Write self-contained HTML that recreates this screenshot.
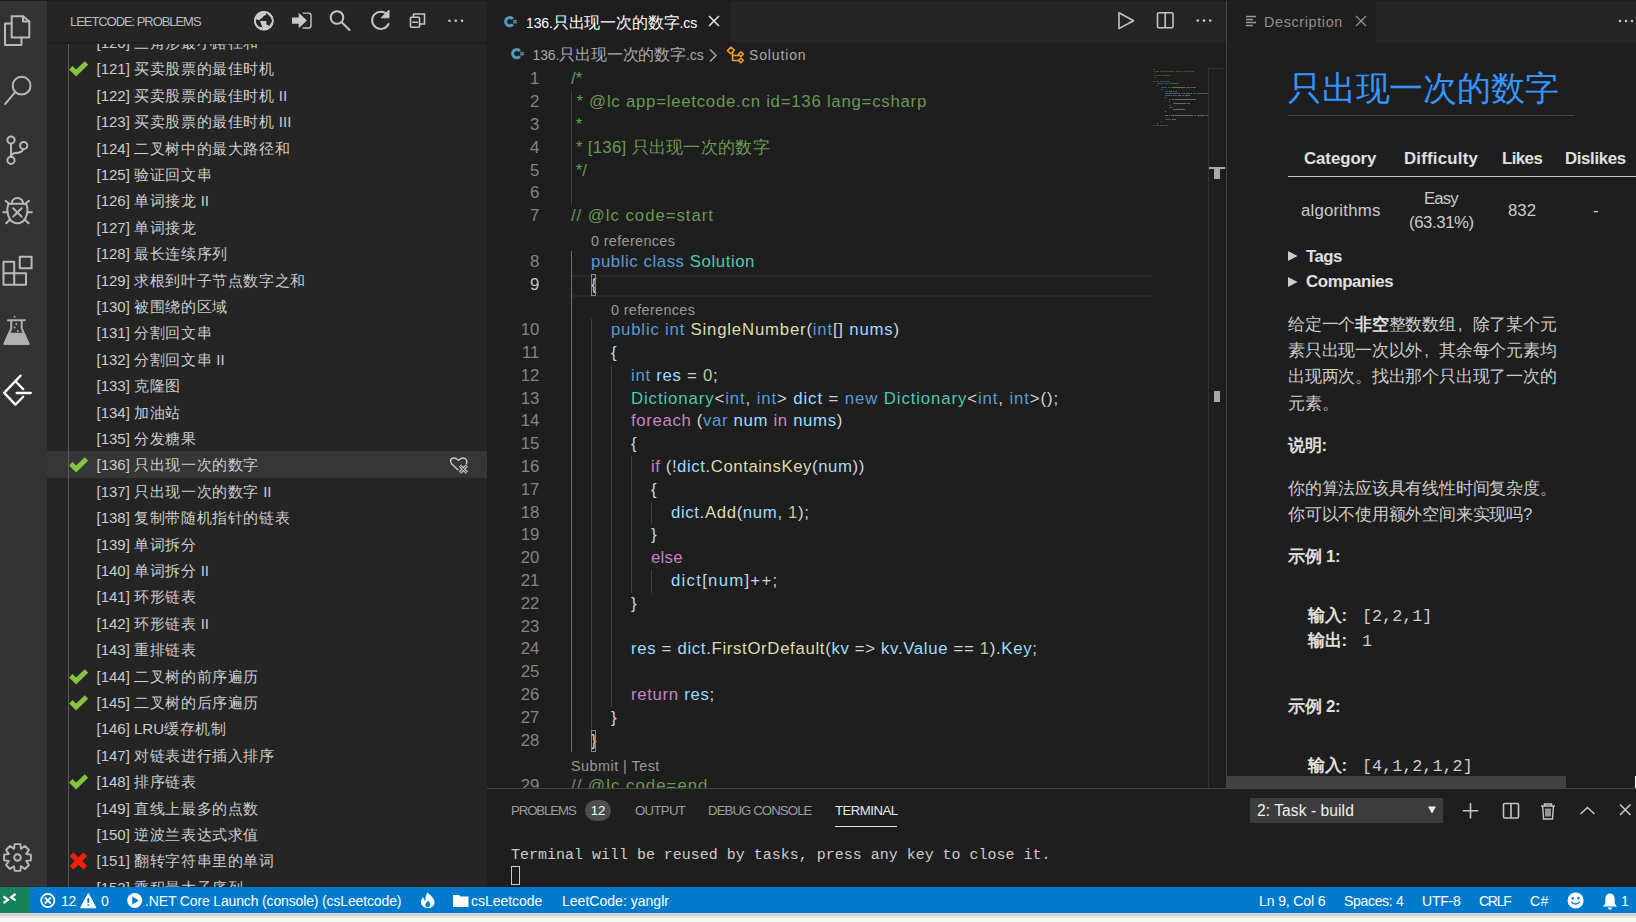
<!DOCTYPE html><html><head><meta charset="utf-8"><style>
*{box-sizing:border-box;margin:0;padding:0}
html,body{width:1636px;height:922px;overflow:hidden;background:#1e1e1e;font-family:"Liberation Sans",sans-serif}
.abs{position:absolute}
#act{left:0;top:0;width:47px;height:887px;background:#333333}
#side{left:47px;top:0;width:440px;height:887px;background:#252526;overflow:hidden}
#sidehdr{left:0;top:0;width:440px;height:42px;background:#252526;z-index:2}
#sidehdr .t{left:23px;top:14.2px;font-size:13px;color:#bbbbbb;white-space:nowrap}
.row{position:absolute;left:0;width:440px;height:26.4px;color:#cccccc;font-size:15px;white-space:nowrap}
.row .tx{position:absolute;left:49.5px;top:5px;line-height:18px}
.row.sel{background:#363636}
#guide{left:21px;top:42px;width:1px;height:845px;background:#585858;z-index:1}
#tabs1{left:487px;top:0;width:739px;height:42px;background:#252526}
#tab1{left:0;top:0;width:243px;height:42px;background:#1e1e1e}
#bc{left:487px;top:42px;width:739px;height:26.4px;background:#1e1e1e}
#code{left:487px;top:68.4px;width:739px;height:719.6px;overflow:hidden;background:#1e1e1e}
.ln{position:absolute;left:0;width:52.4px;text-align:right;font-size:16.8px;color:#858585;line-height:22.8px;height:22.8px}
.cl{position:absolute;white-space:pre;font-size:16.8px;line-height:22.8px;height:22.8px;color:#d4d4d4}
.lens{position:absolute;white-space:pre;font-size:14.4px;line-height:22.8px;color:#999999}
.ig{position:absolute;width:1px;background:#404040}
.c{color:#6a9955}.k{color:#569cd6}.m{color:#c586c0}.t{color:#4ec9b0}.v{color:#9cdcfe}.f{color:#dcdcaa}.n{color:#b5cea8}
#tabs2{left:1226px;top:0;width:410px;height:42px;background:#252526;border-left:1px solid #444444}
#desc{left:1226px;top:42px;width:410px;height:746px;background:#1e1e1e;border-left:1px solid #444444;overflow:hidden}
#panel{left:487px;top:788px;width:1149px;height:99px;background:#1e1e1e;border-top:1px solid #444444}
#status{left:0;top:887px;width:1636px;height:26.4px;background:#007acc;color:#fff;font-size:15.6px;white-space:nowrap}
#remote{left:0;top:0;width:30px;height:26.4px;background:#16825d}

.dh{font-size:16.8px;font-weight:bold;color:#e0e0e0;white-space:nowrap;line-height:20px}
.dt{font-size:16.8px;color:#cccccc;white-space:nowrap;line-height:20px}
.dp{font-size:16.8px;color:#cccccc;white-space:nowrap;line-height:26.2px;letter-spacing:-0.22px}
.dp b{color:#e0e0e0}
.fc{display:inline-block;width:16.8px;text-align:left;padding-left:2px}
.mg{margin-left:15px}
.mono{font-family:"Liberation Mono",monospace;font-size:16.8px;letter-spacing:0}
.pt{position:absolute;top:14px;font-size:13.2px;color:#9d9d9d;white-space:nowrap;line-height:16px}
.sb{position:absolute;top:4.8px;font-size:14px;color:#ffffff;white-space:nowrap;line-height:18px}
.cj{font-size:15.6px}
.row .cj{font-size:15.2px;letter-spacing:0.62px}
#bottom{left:0;top:913.4px;width:1636px;height:8.6px;background:linear-gradient(#dcd5d2 0,#dcd5d2 0.6px,#d1d1d1 0.6px,#d1d1d1 2.6px,#e5e5e5 2.6px,#e5e5e5 5.3px,#f6f7f7 5.3px)}
#desct{letter-spacing:0.629px}#d_cat{letter-spacing:-0.044px}#d_dif{letter-spacing:0.220px}#d_lik{letter-spacing:-0.544px}#d_dis{letter-spacing:-0.344px}#d_alg{letter-spacing:0.208px}#d_easy{letter-spacing:-0.878px}#d_pct{letter-spacing:-0.412px}#d_832{letter-spacing:0.000px}#d_tags{letter-spacing:-0.555px}#d_comp{letter-spacing:-0.363px}#p_prob{letter-spacing:-1.075px}#p_out{letter-spacing:-0.670px}#p_dbg{letter-spacing:-0.889px}#p_term{letter-spacing:-0.523px}#p_text{letter-spacing:0.028px}#p_task{letter-spacing:0.064px}#s_12{letter-spacing:-0.389px}#s_net{letter-spacing:-0.146px}#s_cs{letter-spacing:-0.031px}#s_lc{letter-spacing:0.022px}#s_ln{letter-spacing:-0.111px}#s_sp{letter-spacing:-0.318px}#s_utf{letter-spacing:-0.234px}#s_crlf{letter-spacing:-1.291px}#s_cs2{letter-spacing:0.447px}#d_title{letter-spacing:-0.188px}#sbt{letter-spacing:-1.058px}#tabt{letter-spacing:-0.143px}#bct{letter-spacing:-0.143px}#bcs{letter-spacing:0.863px}#cl2{letter-spacing:0.747px}#cl4{letter-spacing:0.297px}#cl7{letter-spacing:0.956px}#lens0{letter-spacing:0.350px}#cl8{letter-spacing:0.567px}#lens1{letter-spacing:0.350px}#cl10{letter-spacing:0.790px}#cl12{letter-spacing:0.712px}#cl13{letter-spacing:0.886px}#cl14{letter-spacing:0.642px}#cl16{letter-spacing:0.559px}#cl18{letter-spacing:0.621px}#cl20{letter-spacing:0.276px}#cl21{letter-spacing:1.251px}#cl24{letter-spacing:0.658px}#cl26{letter-spacing:0.664px}#lens2{letter-spacing:0.473px}#cl29{letter-spacing:1.033px}</style></head><body><div id="act" class="abs"><svg width="47" height="887" style="position:absolute;left:0;top:0" fill="none" stroke="#b9b9b9" stroke-width="2" stroke-linejoin="round" stroke-linecap="round">
<path d="M11.5 23.5 H5 V45 H21.5 V37.5"/>
<path d="M11.7 16.2 H23 L29.3 21.5 V37.5 H11.7 Z"/><path d="M23 16.2 V21.5 H29.3"/>
<circle cx="21.6" cy="85.7" r="8.9"/><path d="M15.2 92.2 L5.2 103.9"/>
<circle cx="11" cy="140" r="3.6"/><circle cx="11" cy="160.3" r="3.6"/><circle cx="23.7" cy="145.6" r="3.6"/>
<path d="M11 143.6 V156.7"/><path d="M23.2 149.2 C22 152.5 19 153 16 153 C13 153 11.5 154 11 156.7"/>
<path d="M11.6 203.7 A5.8 5.8 0 0 1 23.2 203.7"/><path d="M8.6 203.7 H26.2 C28 208 27.8 214 25 219 C22.8 222.5 20 223.3 17.4 223.3 C14.8 223.3 12 222.5 9.8 219 C7 214 6.8 208 8.6 203.7 Z"/>
<path d="M13.2 208.2 L21.6 216.6 M21.6 208.2 L13.2 216.6"/>
<path d="M5.5 200.8 L9.6 204 M29 200.8 L25.2 204 M3.3 212.2 H7.6 M31.9 212.2 H27.4 M6.2 223.3 L10.4 219.2 M28.6 223.3 L24.4 219.2"/>
<path d="M3.5 261.8 H14.2 V273.3 H26 V284.8 H3.5 Z M3.5 273.3 H14.2 V284.8"/>
<rect x="19.8" y="256.8" width="11.8" height="11.4"/>
<path d="M8 320.2 H24.8 M11.2 320.5 V328.5 L4.5 343.8 H28.5 L21.7 328.5 V320.5" stroke="#b0b0b0"/>
<path d="M9 333.8 H23.8 L28.5 343.8 H4.5 Z" fill="#b0b0b0" stroke="#b0b0b0"/>
<g fill="#b0b0b0" stroke="none"><circle cx="14.6" cy="316.8" r="1"/><circle cx="16.3" cy="324" r="1"/><circle cx="14.6" cy="327.6" r="1"/><circle cx="17.9" cy="331" r="1"/></g>
<path d="M20.6 375.6 L4.2 392.9 L15.4 404.6 L23.2 396.8 M15.4 381.3 L23.2 389.1 M16.6 393 H30.8" stroke="#ffffff" stroke-width="2.3"/>
</svg>
<svg class="abs" style="left:0;top:0" width="47" height="887"><path fill="none" stroke="#b9b9b9" stroke-width="1.9" stroke-linejoin="round" d="M13.98 848.78 L14.65 844.10 L20.35 844.10 L21.02 848.78 L21.17 848.85 L24.96 846.01 L28.99 850.04 L26.15 853.83 L26.22 853.98 L30.90 854.65 L30.90 860.35 L26.22 861.02 L26.15 861.17 L28.99 864.96 L24.96 868.99 L21.17 866.15 L21.02 866.22 L20.35 870.90 L14.65 870.90 L13.98 866.22 L13.83 866.15 L10.04 868.99 L6.01 864.96 L8.85 861.17 L8.78 861.02 L4.10 860.35 L4.10 854.65 L8.78 853.98 L8.85 853.83 L6.01 850.04 L10.04 846.01 L13.83 848.85 Z"/><circle cx="17.5" cy="857.5" r="3.3" fill="none" stroke="#b9b9b9" stroke-width="1.9"/></svg>
</div>
<div id="side" class="abs">
<div id="sidehdr" class="abs"><div class="t abs" id="sbt">LEETCODE: PROBLEMS</div>
<svg class="abs" style="left:0;top:0" width="440" height="42" fill="none" stroke="#c5c5c5" stroke-width="2" stroke-linecap="round" stroke-linejoin="round">
<circle cx="216.9" cy="20.7" r="9.6" fill="#c9c9c9" stroke="none"/>
<path d="M209.2 19.3 L212.9 20.6 L214 24 L215.6 27.6 L211.5 26.5 L209 23 Z" fill="#252526" stroke="none"/>
<path d="M219.4 13.1 L223.5 17 L225.2 21 L222.5 25.8 L219.4 24.6 L219.4 21 L213.1 21 L212.9 19.2 L215.4 17.9 L216.3 16.2 L218.8 15 Z" fill="#252526" stroke="none"/>
<circle cx="216.9" cy="20.7" r="9" stroke="#c9c9c9" stroke-width="1.6"/>
<path d="M245 17.6 H251.7 V12.8 L259.9 20.6 L251.7 28.3 V23.8 H245 Z" fill="#c9c9c9" stroke="none"/>
<path d="M256.2 13.1 H261.5 Q264 13.1 264 15.6 V25.5 Q264 28 261.5 28 H256.2" stroke-width="1.4"/>
<circle cx="290" cy="17.5" r="6.3"/><path d="M294.5 22 L302.5 30"/>
<path d="M340.5 15 A8.6 8.6 0 1 0 341.5 24"/><path d="M342 10.5 V17.8 H334.5 Z" fill="#c5c5c5" stroke-width="1"/>
<rect x="363.5" y="17.2" width="9" height="10" rx="1" stroke-width="1.6"/><path d="M366.5 17 V14 H377.5 V24 H372.8" stroke-width="1.6"/><path d="M365.8 22.2 H370.3" stroke-width="1.6"/>
<g fill="#c5c5c5" stroke="none"><circle cx="402.5" cy="20.8" r="1.3"/><circle cx="408.8" cy="20.8" r="1.3"/><circle cx="415" cy="20.8" r="1.3"/></g>
</svg></div>
<div id="guide" class="abs"></div>
<div class="row" style="top:28.9px"><span class="tx">[120] <span class="cj">三角形最小路径和</span></span></div>
<div class="row" style="top:55.3px"><svg class="abs" style="left:0;top:0" width="45" height="26"><path d="M22.1 14.5 L25.5 11 L29.1 14.4 L37.8 6.2 L41.2 9.8 L29.1 21.5 Z" fill="#82c341"/></svg><span class="tx">[121] <span class="cj">买卖股票的最佳时机</span></span></div>
<div class="row" style="top:81.7px"><span class="tx">[122] <span class="cj">买卖股票的最佳时机</span> II</span></div>
<div class="row" style="top:108.1px"><span class="tx">[123] <span class="cj">买卖股票的最佳时机</span> III</span></div>
<div class="row" style="top:134.5px"><span class="tx">[124] <span class="cj">二叉树中的最大路径和</span></span></div>
<div class="row" style="top:160.9px"><span class="tx">[125] <span class="cj">验证回文串</span></span></div>
<div class="row" style="top:187.3px"><span class="tx">[126] <span class="cj">单词接龙</span> II</span></div>
<div class="row" style="top:213.7px"><span class="tx">[127] <span class="cj">单词接龙</span></span></div>
<div class="row" style="top:240.1px"><span class="tx">[128] <span class="cj">最长连续序列</span></span></div>
<div class="row" style="top:266.5px"><span class="tx">[129] <span class="cj">求根到叶子节点数字之和</span></span></div>
<div class="row" style="top:292.9px"><span class="tx">[130] <span class="cj">被围绕的区域</span></span></div>
<div class="row" style="top:319.3px"><span class="tx">[131] <span class="cj">分割回文串</span></span></div>
<div class="row" style="top:345.7px"><span class="tx">[132] <span class="cj">分割回文串</span> II</span></div>
<div class="row" style="top:372.1px"><span class="tx">[133] <span class="cj">克隆图</span></span></div>
<div class="row" style="top:398.5px"><span class="tx">[134] <span class="cj">加油站</span></span></div>
<div class="row" style="top:424.9px"><span class="tx">[135] <span class="cj">分发糖果</span></span></div>
<div class="row sel" style="top:451.3px"><svg class="abs" style="left:0;top:0" width="45" height="26"><path d="M22.1 14.5 L25.5 11 L29.1 14.4 L37.8 6.2 L41.2 9.8 L29.1 21.5 Z" fill="#82c341"/></svg><span class="tx">[136] <span class="cj">只出现一次的数字</span></span><svg class="abs" style="left:400px;top:5px" width="26" height="20" fill="none" stroke="#c5c5c5" stroke-width="1.5" stroke-linejoin="round"><path d="M11.3 14.2 L4.8 8 C2.6 5.9 3.2 2.2 6.8 2.1 C9 2 10.3 3.3 11.5 4.3 C12.7 3.3 14 2 16.2 2.1 C19.8 2.2 20.6 5.8 19.2 8.4"/><path d="M12.9 9.7 L19.9 16.7 M19.9 9.7 L12.9 16.7" stroke-width="3.2" stroke-linecap="butt"/><path d="M12.9 9.7 L19.9 16.7 M19.9 9.7 L12.9 16.7" stroke="#363636" stroke-width="1" stroke-linecap="butt"/></svg></div>
<div class="row" style="top:477.7px"><span class="tx">[137] <span class="cj">只出现一次的数字</span> II</span></div>
<div class="row" style="top:504.1px"><span class="tx">[138] <span class="cj">复制带随机指针的链表</span></span></div>
<div class="row" style="top:530.5px"><span class="tx">[139] <span class="cj">单词拆分</span></span></div>
<div class="row" style="top:556.9px"><span class="tx">[140] <span class="cj">单词拆分</span> II</span></div>
<div class="row" style="top:583.3px"><span class="tx">[141] <span class="cj">环形链表</span></span></div>
<div class="row" style="top:609.7px"><span class="tx">[142] <span class="cj">环形链表</span> II</span></div>
<div class="row" style="top:636.1px"><span class="tx">[143] <span class="cj">重排链表</span></span></div>
<div class="row" style="top:662.5px"><svg class="abs" style="left:0;top:0" width="45" height="26"><path d="M22.1 14.5 L25.5 11 L29.1 14.4 L37.8 6.2 L41.2 9.8 L29.1 21.5 Z" fill="#82c341"/></svg><span class="tx">[144] <span class="cj">二叉树的前序遍历</span></span></div>
<div class="row" style="top:688.9px"><svg class="abs" style="left:0;top:0" width="45" height="26"><path d="M22.1 14.5 L25.5 11 L29.1 14.4 L37.8 6.2 L41.2 9.8 L29.1 21.5 Z" fill="#82c341"/></svg><span class="tx">[145] <span class="cj">二叉树的后序遍历</span></span></div>
<div class="row" style="top:715.3px"><span class="tx">[146] LRU<span class="cj">缓存机制</span></span></div>
<div class="row" style="top:741.7px"><span class="tx">[147] <span class="cj">对链表进行插入排序</span></span></div>
<div class="row" style="top:768.1px"><svg class="abs" style="left:0;top:0" width="45" height="26"><path d="M22.1 14.5 L25.5 11 L29.1 14.4 L37.8 6.2 L41.2 9.8 L29.1 21.5 Z" fill="#82c341"/></svg><span class="tx">[148] <span class="cj">排序链表</span></span></div>
<div class="row" style="top:794.5px"><span class="tx">[149] <span class="cj">直线上最多的点数</span></span></div>
<div class="row" style="top:820.9px"><span class="tx">[150] <span class="cj">逆波兰表达式求值</span></span></div>
<div class="row" style="top:847.3px"><svg class="abs" style="left:0;top:0" width="45" height="26"><path d="M22.9 8.9 L26.4 5.4 L31.4 10.3 L36.5 5.4 L40.1 8.9 L35.2 14.1 L40.1 19.1 L36.5 22.6 L31.4 17.7 L26.4 22.6 L22.9 19.1 L27.6 14.1 Z" fill="#f52100"/></svg><span class="tx">[151] <span class="cj">翻转字符串里的单词</span></span></div>
<div class="row" style="top:873.7px"><span class="tx">[152] <span class="cj">乘积最大子序列</span></span></div>
</div>
<div id="tabs1" class="abs"><div id="tab1" class="abs"><svg class="abs" style="left:16.5px;top:14.5px" width="13.299999999999999" height="13.299999999999999" viewBox="0 0 14 14"><path d="M9.3 4.2 A4.3 4.3 0 1 0 9.3 9.8" fill="none" stroke="#519aba" stroke-width="3.2"/><path d="M10.6 5 V9.2 M12.6 5 V9.2 M9.6 6.2 H13.6 M9.6 8 H13.6" stroke="#519aba" stroke-width="0.9"/></svg>
<div class="abs" id="tabt" style="left:39px;top:13.5px;font-size:14px;line-height:18px;color:#ffffff;white-space:nowrap">136.<span class="cj">只出现一次的数字</span>.cs</div>
<svg class="abs" style="left:221px;top:15px" width="12" height="12"><path d="M1 1 L11 11 M11 1 L1 11" stroke="#e8e8e8" stroke-width="1.5"/></svg></div>
<svg class="abs" style="left:620px;top:0" width="119" height="42" fill="none" stroke="#c5c5c5" stroke-width="1.6" stroke-linejoin="round">
<path d="M12 12.8 L26.5 20.7 L12 28.6 Z"/>
<rect x="50.5" y="12.8" width="15.5" height="15" rx="1.5"/><path d="M58.2 12.8 V27.8"/>
<g fill="#c5c5c5" stroke="none"><circle cx="90.8" cy="20.6" r="1.3"/><circle cx="97" cy="20.6" r="1.3"/><circle cx="103.2" cy="20.6" r="1.3"/></g>
</svg></div>
<div id="bc" class="abs"><svg class="abs" style="left:23.5px;top:5px" width="13.299999999999999" height="13.299999999999999" viewBox="0 0 14 14"><path d="M9.3 4.2 A4.3 4.3 0 1 0 9.3 9.8" fill="none" stroke="#519aba" stroke-width="3.2"/><path d="M10.6 5 V9.2 M12.6 5 V9.2 M9.6 6.2 H13.6 M9.6 8 H13.6" stroke="#519aba" stroke-width="0.9"/></svg>
<div class="abs" id="bct" style="left:45.5px;top:4px;font-size:14px;line-height:18px;color:#a9a9a9;white-space:nowrap">136.<span class="cj">只出现一次的数字</span>.cs</div>
<svg class="abs" style="left:220px;top:6px" width="12" height="16"><path d="M3 1.5 L9 7.5 L3 13.5" fill="none" stroke="#a9a9a9" stroke-width="1.4"/></svg>
<svg class="abs" style="left:239px;top:3px" width="20" height="20" viewBox="0 0 20 20" fill="none" stroke="#ee9d28" stroke-width="1.6" stroke-linejoin="round"><path d="M1.5 5.6 L5 2 L8.3 5.3 L4.8 8.8 Z"/><path d="M6.6 7 V15.5 H13"/><path d="M6.6 10.5 H13"/><path d="M12.5 9.2 L15 6.8 L17.3 9.1 L14.8 11.5 Z"/><path d="M12.5 15.5 L15 13 L17.3 15.3 L14.8 17.8 Z"/></svg>
<div class="abs" id="bcs" style="left:262px;top:4px;font-size:14px;line-height:18px;color:#a9a9a9;white-space:nowrap">Solution</div>
</div>
<div id="code" class="abs">
<div class="ln" style="top:0.0px;color:#858585">1</div>
<div class="cl" style="left:84px;top:0.0px"><span class="c">/*</span></div>
<div class="ln" style="top:22.8px;color:#858585">2</div>
<div class="cl" id="cl2" style="left:84px;top:22.8px"><span class="c"> * @lc app=leetcode.cn id=136 lang=csharp</span></div>
<div class="ln" style="top:45.6px;color:#858585">3</div>
<div class="cl" style="left:84px;top:45.6px"><span class="c"> *</span></div>
<div class="ln" style="top:68.4px;color:#858585">4</div>
<div class="cl" id="cl4" style="left:84px;top:68.4px"><span class="c"> * [136] 只出现一次的数字</span></div>
<div class="ln" style="top:91.2px;color:#858585">5</div>
<div class="cl" style="left:84px;top:91.2px"><span class="c"> */</span></div>
<div class="ln" style="top:114.0px;color:#858585">6</div>
<div class="cl" style="left:84px;top:114.0px"></div>
<div class="ln" style="top:136.8px;color:#858585">7</div>
<div class="cl" id="cl7" style="left:84px;top:136.8px"><span class="c">// @lc code=start</span></div>
<div class="lens" id="lens0" style="left:104px;top:161.9px">0 references</div>
<div class="ln" style="top:182.4px;color:#858585">8</div>
<div class="cl" id="cl8" style="left:104px;top:182.4px"><span class="k">public</span> <span class="k">class</span> <span class="t">Solution</span></div>
<div class="ln" style="top:205.2px;color:#c6c6c6">9</div>
<div class="cl" style="left:104px;top:205.2px">{</div>
<div class="lens" id="lens1" style="left:124px;top:230.3px">0 references</div>
<div class="ln" style="top:250.8px;color:#858585">10</div>
<div class="cl" id="cl10" style="left:124px;top:250.8px"><span class="k">public</span> <span class="k">int</span> <span class="f">SingleNumber</span>(<span class="k">int</span>[] <span class="v">nums</span>)</div>
<div class="ln" style="top:273.6px;color:#858585">11</div>
<div class="cl" style="left:124px;top:273.6px">{</div>
<div class="ln" style="top:296.4px;color:#858585">12</div>
<div class="cl" id="cl12" style="left:144px;top:296.4px"><span class="k">int</span> <span class="v">res</span> = <span class="n">0</span>;</div>
<div class="ln" style="top:319.2px;color:#858585">13</div>
<div class="cl" id="cl13" style="left:144px;top:319.2px"><span class="t">Dictionary</span>&lt;<span class="k">int</span>, <span class="k">int</span>&gt; <span class="v">dict</span> = <span class="k">new</span> <span class="t">Dictionary</span>&lt;<span class="k">int</span>, <span class="k">int</span>&gt;();</div>
<div class="ln" style="top:342.0px;color:#858585">14</div>
<div class="cl" id="cl14" style="left:144px;top:342.0px"><span class="m">foreach</span> (<span class="k">var</span> <span class="v">num</span> <span class="m">in</span> <span class="v">nums</span>)</div>
<div class="ln" style="top:364.8px;color:#858585">15</div>
<div class="cl" style="left:144px;top:364.8px">{</div>
<div class="ln" style="top:387.6px;color:#858585">16</div>
<div class="cl" id="cl16" style="left:164px;top:387.6px"><span class="m">if</span> (!<span class="v">dict</span>.<span class="f">ContainsKey</span>(<span class="v">num</span>))</div>
<div class="ln" style="top:410.4px;color:#858585">17</div>
<div class="cl" style="left:164px;top:410.4px">{</div>
<div class="ln" style="top:433.2px;color:#858585">18</div>
<div class="cl" id="cl18" style="left:184px;top:433.2px"><span class="v">dict</span>.<span class="f">Add</span>(<span class="v">num</span>, <span class="n">1</span>);</div>
<div class="ln" style="top:456.0px;color:#858585">19</div>
<div class="cl" style="left:164px;top:456.0px">}</div>
<div class="ln" style="top:478.8px;color:#858585">20</div>
<div class="cl" id="cl20" style="left:164px;top:478.8px"><span class="m">else</span></div>
<div class="ln" style="top:501.6px;color:#858585">21</div>
<div class="cl" id="cl21" style="left:184px;top:501.6px"><span class="v">dict</span>[<span class="v">num</span>]++;</div>
<div class="ln" style="top:524.4px;color:#858585">22</div>
<div class="cl" style="left:144px;top:524.4px">}</div>
<div class="ln" style="top:547.2px;color:#858585">23</div>
<div class="cl" style="left:144px;top:547.2px"></div>
<div class="ln" style="top:570.0px;color:#858585">24</div>
<div class="cl" id="cl24" style="left:144px;top:570.0px"><span class="v">res</span> = <span class="v">dict</span>.<span class="f">FirstOrDefault</span>(<span class="v">kv</span> =&gt; <span class="v">kv</span>.<span class="v">Value</span> == <span class="n">1</span>).<span class="v">Key</span>;</div>
<div class="ln" style="top:592.8px;color:#858585">25</div>
<div class="cl" style="left:144px;top:592.8px"></div>
<div class="ln" style="top:615.6px;color:#858585">26</div>
<div class="cl" id="cl26" style="left:144px;top:615.6px"><span class="m">return</span> <span class="v">res</span>;</div>
<div class="ln" style="top:638.4px;color:#858585">27</div>
<div class="cl" style="left:124px;top:638.4px">}</div>
<div class="ln" style="top:661.2px;color:#858585">28</div>
<div class="cl" style="left:104px;top:661.2px">}</div>
<div class="lens" id="lens2" style="left:84px;top:686.3px">Submit | Test</div>
<div class="ln" style="top:706.8px;color:#858585">29</div>
<div class="cl" id="cl29" style="left:84px;top:706.8px"><span class="c">// @lc code=end</span></div>
<div class="abs" style="left:84px;top:22.8px;width:1px;height:114.0px;background:#404040"></div>
<div class="abs" style="left:84px;top:182.4px;width:1px;height:501.6px;background:#707070"></div>
<div class="abs" style="left:104px;top:250.8px;width:1px;height:410.4px;background:#404040"></div>
<div class="abs" style="left:124px;top:296.4px;width:1px;height:342.0px;background:#404040"></div>
<div class="abs" style="left:144px;top:387.6px;width:1px;height:136.8px;background:#404040"></div>
<div class="abs" style="left:164px;top:433.2px;width:1px;height:22.8px;background:#404040"></div>
<div class="abs" style="left:164px;top:501.6px;width:1px;height:22.8px;background:#404040"></div>
<div class="abs" style="left:85px;top:206.2px;width:580px;height:22.8px;border-top:2px solid #282828;border-bottom:2px solid #282828"></div>
<div class="abs" style="left:104px;top:205.2px;width:4.5px;height:22.8px;border:1px solid #888888"></div>
<div class="abs" style="left:104px;top:661.2px;width:4.5px;height:22.8px;border:1px solid #888888"></div>
</div>
<div id="tabs2" class="abs"><div class="abs" style="left:0;top:0;width:149px;height:42px;background:#1e1e1e"></div>
<svg class="abs" style="left:19px;top:15px" width="12" height="12"><path d="M0 1.5 H10 M0 4.5 H7 M0 7.5 H10 M0 10.5 H7" stroke="#9a9a9a" stroke-width="1.6"/></svg>
<div id="desct" class="abs" style="left:37px;top:13.5px;font-size:14.4px;color:#8f8f8f;white-space:nowrap">Description</div>
<svg class="abs" style="left:128px;top:15px" width="12" height="12"><path d="M1 1 L11 11 M11 1 L1 11" stroke="#8f8f8f" stroke-width="1.4"/></svg>
<g></g><svg class="abs" style="left:389px;top:16px" width="20" height="10"><g fill="#c5c5c5"><circle cx="4" cy="5" r="1.3"/><circle cx="10" cy="5" r="1.3"/><circle cx="16" cy="5" r="1.3"/></g></svg>
</div>
<div id="desc" class="abs">
<div id="d_title" class="abs" style="left:61px;top:26.5px;font-size:33.6px;color:#3794ff;white-space:nowrap;line-height:40px">只出现一次的数字</div>
<div class="abs" style="left:61px;top:73px;width:286px;height:1px;background:#464646"></div>
<div id="d_cat" class="abs dh" style="left:77px;top:106.6px">Category</div>
<div id="d_dif" class="abs dh" style="left:177px;top:106.6px">Difficulty</div>
<div id="d_lik" class="abs dh" style="left:275px;top:106.6px">Likes</div>
<div id="d_dis" class="abs dh" style="left:338px;top:106.6px">Dislikes</div>
<div class="abs" style="left:61px;top:134px;width:360px;height:1px;background:#cccccc"></div>
<div id="d_alg" class="abs dt" style="left:74px;top:158.5px">algorithms</div>
<div id="d_easy" class="abs dt" style="left:197px;top:147px">Easy</div>
<div id="d_pct" class="abs dt" style="left:182px;top:171px">(63.31%)</div>
<div id="d_832" class="abs dt" style="left:281px;top:159px">832</div>
<div class="abs dt" style="left:366px;top:159px">-</div>
<svg class="abs" style="left:60px;top:208px" width="12" height="12"><path d="M1 1 L10.5 6 L1 11 Z" fill="#cccccc"/></svg>
<div id="d_tags" class="abs dh" style="left:79px;top:204.5px">Tags</div>
<svg class="abs" style="left:60px;top:234px" width="12" height="12"><path d="M1 1 L10.5 6 L1 11 Z" fill="#cccccc"/></svg>
<div id="d_comp" class="abs dh" style="left:79px;top:230px">Companies</div>
<div class="abs dp" style="left:61px;top:270px;width:290px">给定一个<b>非空</b>整数数组<span class="fc">,</span>除了某个元<br>素只出现一次以外<span class="fc">,</span>其余每个元素均<br>出现两次。找出那个只出现了一次的<br>元素。</div>
<div class="abs dp" style="left:61px;top:391px"><b>说明:</b></div>
<div class="abs dp" style="left:61px;top:434px;width:300px">你的算法应该具有线性时间复杂度。<br>你可以不使用额外空间来实现吗?</div>
<div class="abs dp" style="left:61px;top:502px"><b>示例 1:</b></div>
<div class="abs dp" style="left:81px;top:560.5px"><b>输入:</b><span class="mono mg">[2,2,1]</span></div><div class="abs dp" style="left:81px;top:585.5px"><b>输出:</b><span class="mono mg">1</span></div>
<div class="abs dp" style="left:61px;top:651.5px"><b>示例 2:</b></div>
<div class="abs dp" style="left:81px;top:711px"><b>输入:</b><span class="mono mg">[4,1,2,1,2]</span></div>
<div class="abs" style="left:0;top:734px;width:339px;height:12px;background:#424242"></div>
</div>
<div id="panel" class="abs">
<div id="p_prob" class="pt" style="left:24px">PROBLEMS</div>
<div class="abs" style="left:98px;top:11px;width:26px;height:21px;border-radius:11px;background:#4d4d4d;color:#fff;font-size:13.2px;text-align:center;line-height:21px">12</div>
<div id="p_out" class="pt" style="left:148px">OUTPUT</div>
<div id="p_dbg" class="pt" style="left:221px">DEBUG CONSOLE</div>
<div id="p_term" class="pt" style="left:348px;color:#e7e7e7">TERMINAL</div>
<div class="abs" style="left:348px;top:37px;width:62px;height:1px;background:#e7e7e7"></div>
<div id="p_text" class="abs" style="left:24px;top:56.2px;font-family:'Liberation Mono',monospace;font-size:14.95px;color:#cccccc;white-space:pre;line-height:20px">Terminal will be reused by tasks, press any key to close it.</div>
<div class="abs" style="left:24px;top:76.5px;width:9px;height:19px;border:1px solid #cccccc"></div>
<div class="abs" style="left:763px;top:9px;width:193px;height:25px;background:#3c3c3c"></div>
<div id="p_task" class="abs" style="left:770px;top:13px;font-size:15.6px;color:#f0f0f0;white-space:nowrap;line-height:18px">2: Task - build</div>
<svg class="abs" style="left:940px;top:16px" width="10" height="10"><path d="M1 1.5 H9 L5 8.5 Z" fill="#f0f0f0"/></svg>
<svg class="abs" style="left:960px;top:0" width="189" height="42" fill="none" stroke="#c5c5c5" stroke-width="1.6">
<path d="M23.5 14 V29.5 M15.7 21.8 H31.3"/>
<rect x="56.5" y="14.5" width="15" height="14.5" rx="1.2"/><path d="M64 14.5 V29"/>
<path d="M94 17 H108 M97.5 17 V15 H104.5 V17 M95.7 17.2 L96.6 30 H105.5 L106.4 17.2 M99 19.5 V27.5 M101 19.5 V27.5 M103 19.5 V27.5" stroke-width="1.4"/>
<path d="M133.5 25 L140.5 18.5 L147.5 25"/>
<path d="M173 15.5 L183.5 26 M183.5 15.5 L173 26"/>
</svg>
</div>
<div id="status" class="abs"><div id="remote" class="abs"></div>
<svg class="abs" style="left:0;top:0" width="700" height="26" fill="none" stroke="#ffffff" stroke-width="2">
<path d="M3.5 9.5 L8 12.7 L3.5 16 M15.5 7 L11.2 10.2 L15.5 13.5" stroke-width="2.2"/>
<circle cx="47.8" cy="13.5" r="6.6" stroke-width="1.8"/><path d="M44.8 10.5 L50.8 16.5 M50.8 10.5 L44.8 16.5" stroke-width="1.8"/>
<path d="M88.3 6.5 L96 20.8 H80.6 Z" fill="#ffffff" stroke-width="1"/>
<path d="M88.3 11 V16 M88.3 17.5 V19" stroke="#007acc" stroke-width="1.8"/>
<circle cx="134.7" cy="13.5" r="7.5" fill="#ffffff" stroke="none"/><path d="M132.3 9.5 L138.8 13.5 L132.3 17.5 Z" fill="#007acc" stroke="none"/>
<path d="M427.5 5.5 C431 9 434.5 11 434.5 15.5 C434.5 19 431.5 21 428 21 C424 21 421 18.5 421 15 C421 12.5 422.5 11 423.5 10 C423.5 12 424.5 13.5 425.5 14 C425 11 426 8 427.5 5.5 Z" fill="#ffffff" stroke="none"/>
<path d="M428 13.5 C429.5 15 430.5 16.5 430 18.5 C429.5 19.8 428.5 20.3 427.7 20.3 C426.3 20.3 425.3 19.3 425.3 18 C425.3 16.5 427 15.5 428 13.5 Z" fill="#007acc" stroke="none"/>
<path d="M453 8 H459 L460.5 9.5 H468.5 V20 H453 Z" fill="#ffffff" stroke="none"/>
</svg>
<div id="s_12" class="sb" style="left:61px">12</div>
<div class="sb" style="left:101px">0</div>
<div id="s_net" class="sb" style="left:145px">.NET Core Launch (console) (csLeetcode)</div>
<div id="s_cs" class="sb" style="left:471px">csLeetcode</div>
<div id="s_lc" class="sb" style="left:562px">LeetCode: yanglr</div>
<div id="s_ln" class="sb" style="left:1259px">Ln 9, Col 6</div>
<div id="s_sp" class="sb" style="left:1344px">Spaces: 4</div>
<div id="s_utf" class="sb" style="left:1422px">UTF-8</div>
<div id="s_crlf" class="sb" style="left:1479px">CRLF</div>
<div id="s_cs2" class="sb" style="left:1530px">C#</div>
<svg class="abs" style="left:1560px;top:0" width="76" height="26">
<circle cx="15.6" cy="13.5" r="8" fill="#ffffff"/><circle cx="12.7" cy="11.3" r="1.2" fill="#007acc"/><circle cx="18.5" cy="11.3" r="1.2" fill="#007acc"/><path d="M11.5 14.8 C13 17.8 18.2 17.8 19.7 14.8" stroke="#007acc" stroke-width="1.4" fill="none"/>
<path d="M50 6.5 C47 6.5 45.3 9 45.3 12 V16.5 L43 19.5 H57 L54.7 16.5 V12 C54.7 9 53 6.5 50 6.5 Z M48 20.5 A2 2 0 0 0 52 20.5 Z" fill="#ffffff"/>
</svg>
<div class="sb" style="left:1621px">1</div>
</div>
<div class="abs" style="left:0;top:0;width:1636px;height:1px;background:#1e1e1e;z-index:5"></div>
<div class="abs" style="left:47px;top:42px;width:440px;height:2px;background:#1f1f22;z-index:5"></div>
<div class="abs" style="left:1153px;top:68.7px;width:2px;height:1.5px;background:#6a9955;opacity:0.4"></div><div class="abs" style="left:1154px;top:70.7px;width:1px;height:1.5px;background:#6a9955;opacity:0.4"></div><div class="abs" style="left:1156px;top:70.7px;width:3px;height:1.5px;background:#6a9955;opacity:0.4"></div><div class="abs" style="left:1160px;top:70.7px;width:15px;height:1.5px;background:#6a9955;opacity:0.4"></div><div class="abs" style="left:1176px;top:70.7px;width:6px;height:1.5px;background:#6a9955;opacity:0.4"></div><div class="abs" style="left:1183px;top:70.7px;width:11px;height:1.5px;background:#6a9955;opacity:0.4"></div><div class="abs" style="left:1154px;top:72.7px;width:1px;height:1.5px;background:#6a9955;opacity:0.4"></div><div class="abs" style="left:1154px;top:74.7px;width:1px;height:1.5px;background:#6a9955;opacity:0.4"></div><div class="abs" style="left:1156px;top:74.7px;width:5px;height:1.5px;background:#6a9955;opacity:0.4"></div><div class="abs" style="left:1162px;top:74.7px;width:8px;height:1.5px;background:#6a9955;opacity:0.4"></div><div class="abs" style="left:1154px;top:76.7px;width:2px;height:1.5px;background:#6a9955;opacity:0.4"></div><div class="abs" style="left:1153px;top:80.7px;width:2px;height:1.5px;background:#6a9955;opacity:0.4"></div><div class="abs" style="left:1156px;top:80.7px;width:3px;height:1.5px;background:#6a9955;opacity:0.4"></div><div class="abs" style="left:1160px;top:80.7px;width:10px;height:1.5px;background:#6a9955;opacity:0.4"></div><div class="abs" style="left:1157px;top:82.7px;width:6px;height:1.5px;background:#569cd6;opacity:0.4"></div><div class="abs" style="left:1164px;top:82.7px;width:5px;height:1.5px;background:#569cd6;opacity:0.4"></div><div class="abs" style="left:1170px;top:82.7px;width:8px;height:1.5px;background:#4ec9b0;opacity:0.4"></div><div class="abs" style="left:1157px;top:84.7px;width:1px;height:1.5px;background:#d4d4d4;opacity:0.4"></div><div class="abs" style="left:1161px;top:86.7px;width:6px;height:1.5px;background:#569cd6;opacity:0.4"></div><div class="abs" style="left:1168px;top:86.7px;width:3px;height:1.5px;background:#569cd6;opacity:0.4"></div><div class="abs" style="left:1172px;top:86.7px;width:12px;height:1.5px;background:#dcdcaa;opacity:0.4"></div><div class="abs" style="left:1184px;top:86.7px;width:1px;height:1.5px;background:#d4d4d4;opacity:0.4"></div><div class="abs" style="left:1185px;top:86.7px;width:3px;height:1.5px;background:#569cd6;opacity:0.4"></div><div class="abs" style="left:1188px;top:86.7px;width:2px;height:1.5px;background:#d4d4d4;opacity:0.4"></div><div class="abs" style="left:1191px;top:86.7px;width:4px;height:1.5px;background:#9cdcfe;opacity:0.4"></div><div class="abs" style="left:1195px;top:86.7px;width:1px;height:1.5px;background:#d4d4d4;opacity:0.4"></div><div class="abs" style="left:1161px;top:88.7px;width:1px;height:1.5px;background:#d4d4d4;opacity:0.4"></div><div class="abs" style="left:1165px;top:90.7px;width:3px;height:1.5px;background:#569cd6;opacity:0.4"></div><div class="abs" style="left:1169px;top:90.7px;width:3px;height:1.5px;background:#9cdcfe;opacity:0.4"></div><div class="abs" style="left:1173px;top:90.7px;width:1px;height:1.5px;background:#d4d4d4;opacity:0.4"></div><div class="abs" style="left:1175px;top:90.7px;width:1px;height:1.5px;background:#b5cea8;opacity:0.4"></div><div class="abs" style="left:1176px;top:90.7px;width:1px;height:1.5px;background:#d4d4d4;opacity:0.4"></div><div class="abs" style="left:1165px;top:92.7px;width:10px;height:1.5px;background:#4ec9b0;opacity:0.4"></div><div class="abs" style="left:1175px;top:92.7px;width:1px;height:1.5px;background:#d4d4d4;opacity:0.4"></div><div class="abs" style="left:1176px;top:92.7px;width:3px;height:1.5px;background:#569cd6;opacity:0.4"></div><div class="abs" style="left:1179px;top:92.7px;width:1px;height:1.5px;background:#d4d4d4;opacity:0.4"></div><div class="abs" style="left:1181px;top:92.7px;width:3px;height:1.5px;background:#569cd6;opacity:0.4"></div><div class="abs" style="left:1184px;top:92.7px;width:1px;height:1.5px;background:#d4d4d4;opacity:0.4"></div><div class="abs" style="left:1186px;top:92.7px;width:4px;height:1.5px;background:#9cdcfe;opacity:0.4"></div><div class="abs" style="left:1191px;top:92.7px;width:1px;height:1.5px;background:#d4d4d4;opacity:0.4"></div><div class="abs" style="left:1193px;top:92.7px;width:3px;height:1.5px;background:#569cd6;opacity:0.4"></div><div class="abs" style="left:1197px;top:92.7px;width:10px;height:1.5px;background:#4ec9b0;opacity:0.4"></div><div class="abs" style="left:1207px;top:92.7px;width:1px;height:1.5px;background:#d4d4d4;opacity:0.4"></div><div class="abs" style="left:1165px;top:94.7px;width:7px;height:1.5px;background:#c586c0;opacity:0.4"></div><div class="abs" style="left:1173px;top:94.7px;width:1px;height:1.5px;background:#d4d4d4;opacity:0.4"></div><div class="abs" style="left:1174px;top:94.7px;width:3px;height:1.5px;background:#569cd6;opacity:0.4"></div><div class="abs" style="left:1178px;top:94.7px;width:3px;height:1.5px;background:#9cdcfe;opacity:0.4"></div><div class="abs" style="left:1182px;top:94.7px;width:2px;height:1.5px;background:#c586c0;opacity:0.4"></div><div class="abs" style="left:1185px;top:94.7px;width:4px;height:1.5px;background:#9cdcfe;opacity:0.4"></div><div class="abs" style="left:1189px;top:94.7px;width:1px;height:1.5px;background:#d4d4d4;opacity:0.4"></div><div class="abs" style="left:1165px;top:96.7px;width:1px;height:1.5px;background:#d4d4d4;opacity:0.4"></div><div class="abs" style="left:1169px;top:98.7px;width:2px;height:1.5px;background:#c586c0;opacity:0.4"></div><div class="abs" style="left:1172px;top:98.7px;width:2px;height:1.5px;background:#d4d4d4;opacity:0.4"></div><div class="abs" style="left:1174px;top:98.7px;width:4px;height:1.5px;background:#9cdcfe;opacity:0.4"></div><div class="abs" style="left:1178px;top:98.7px;width:1px;height:1.5px;background:#d4d4d4;opacity:0.4"></div><div class="abs" style="left:1179px;top:98.7px;width:11px;height:1.5px;background:#dcdcaa;opacity:0.4"></div><div class="abs" style="left:1190px;top:98.7px;width:1px;height:1.5px;background:#d4d4d4;opacity:0.4"></div><div class="abs" style="left:1191px;top:98.7px;width:3px;height:1.5px;background:#9cdcfe;opacity:0.4"></div><div class="abs" style="left:1194px;top:98.7px;width:2px;height:1.5px;background:#d4d4d4;opacity:0.4"></div><div class="abs" style="left:1169px;top:100.7px;width:1px;height:1.5px;background:#d4d4d4;opacity:0.4"></div><div class="abs" style="left:1173px;top:102.7px;width:4px;height:1.5px;background:#9cdcfe;opacity:0.4"></div><div class="abs" style="left:1177px;top:102.7px;width:1px;height:1.5px;background:#d4d4d4;opacity:0.4"></div><div class="abs" style="left:1178px;top:102.7px;width:3px;height:1.5px;background:#dcdcaa;opacity:0.4"></div><div class="abs" style="left:1181px;top:102.7px;width:1px;height:1.5px;background:#d4d4d4;opacity:0.4"></div><div class="abs" style="left:1182px;top:102.7px;width:3px;height:1.5px;background:#9cdcfe;opacity:0.4"></div><div class="abs" style="left:1185px;top:102.7px;width:1px;height:1.5px;background:#d4d4d4;opacity:0.4"></div><div class="abs" style="left:1187px;top:102.7px;width:1px;height:1.5px;background:#b5cea8;opacity:0.4"></div><div class="abs" style="left:1188px;top:102.7px;width:2px;height:1.5px;background:#d4d4d4;opacity:0.4"></div><div class="abs" style="left:1169px;top:104.7px;width:1px;height:1.5px;background:#d4d4d4;opacity:0.4"></div><div class="abs" style="left:1169px;top:106.7px;width:4px;height:1.5px;background:#c586c0;opacity:0.4"></div><div class="abs" style="left:1173px;top:108.7px;width:4px;height:1.5px;background:#9cdcfe;opacity:0.4"></div><div class="abs" style="left:1177px;top:108.7px;width:1px;height:1.5px;background:#d4d4d4;opacity:0.4"></div><div class="abs" style="left:1178px;top:108.7px;width:3px;height:1.5px;background:#9cdcfe;opacity:0.4"></div><div class="abs" style="left:1181px;top:108.7px;width:4px;height:1.5px;background:#d4d4d4;opacity:0.4"></div><div class="abs" style="left:1165px;top:110.7px;width:1px;height:1.5px;background:#d4d4d4;opacity:0.4"></div><div class="abs" style="left:1165px;top:114.7px;width:3px;height:1.5px;background:#9cdcfe;opacity:0.4"></div><div class="abs" style="left:1169px;top:114.7px;width:1px;height:1.5px;background:#d4d4d4;opacity:0.4"></div><div class="abs" style="left:1171px;top:114.7px;width:4px;height:1.5px;background:#9cdcfe;opacity:0.4"></div><div class="abs" style="left:1175px;top:114.7px;width:1px;height:1.5px;background:#d4d4d4;opacity:0.4"></div><div class="abs" style="left:1176px;top:114.7px;width:14px;height:1.5px;background:#dcdcaa;opacity:0.4"></div><div class="abs" style="left:1190px;top:114.7px;width:1px;height:1.5px;background:#d4d4d4;opacity:0.4"></div><div class="abs" style="left:1191px;top:114.7px;width:2px;height:1.5px;background:#9cdcfe;opacity:0.4"></div><div class="abs" style="left:1194px;top:114.7px;width:2px;height:1.5px;background:#d4d4d4;opacity:0.4"></div><div class="abs" style="left:1197px;top:114.7px;width:2px;height:1.5px;background:#9cdcfe;opacity:0.4"></div><div class="abs" style="left:1199px;top:114.7px;width:1px;height:1.5px;background:#d4d4d4;opacity:0.4"></div><div class="abs" style="left:1200px;top:114.7px;width:5px;height:1.5px;background:#9cdcfe;opacity:0.4"></div><div class="abs" style="left:1206px;top:114.7px;width:2px;height:1.5px;background:#d4d4d4;opacity:0.4"></div><div class="abs" style="left:1165px;top:118.7px;width:6px;height:1.5px;background:#c586c0;opacity:0.4"></div><div class="abs" style="left:1172px;top:118.7px;width:3px;height:1.5px;background:#9cdcfe;opacity:0.4"></div><div class="abs" style="left:1175px;top:118.7px;width:1px;height:1.5px;background:#d4d4d4;opacity:0.4"></div><div class="abs" style="left:1161px;top:120.7px;width:1px;height:1.5px;background:#d4d4d4;opacity:0.4"></div><div class="abs" style="left:1157px;top:122.7px;width:1px;height:1.5px;background:#d4d4d4;opacity:0.4"></div><div class="abs" style="left:1153px;top:124.7px;width:2px;height:1.5px;background:#6a9955;opacity:0.4"></div><div class="abs" style="left:1156px;top:124.7px;width:3px;height:1.5px;background:#6a9955;opacity:0.4"></div><div class="abs" style="left:1160px;top:124.7px;width:8px;height:1.5px;background:#6a9955;opacity:0.4"></div>
<div class="abs" style="left:1208px;top:68.4px;width:1px;height:719.6px;background:#333333"></div>
<div class="abs" style="left:1208px;top:68px;width:17px;height:1px;background:#333333"></div>
<div class="abs" style="left:1209px;top:167px;width:16px;height:2px;background:#a8a8a8"></div>
<div class="abs" style="left:1214.2px;top:169px;width:5.8px;height:10px;background:#a8a8a8"></div>
<div class="abs" style="left:1214.2px;top:391px;width:5.8px;height:11px;background:#a8a8a8"></div>
<div class="abs" style="left:1635px;top:776px;width:1px;height:12px;background:#ffffff"></div>
<div id="bottom" class="abs"></div></body></html>
